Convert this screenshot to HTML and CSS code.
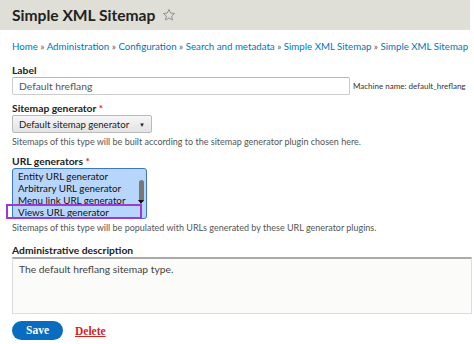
FILE: index.html
```html
<!DOCTYPE html>
<html lang="en">
<head>
	<meta charset="UTF-8">
	<title>Simple XML Sitemap</title>
	<link rel="stylesheet" href="styles.css">
</head>
<body>
	<div class="page-head">
		<h1>Simple XML Sitemap</h1>
		<svg class="star" width="14" height="14" viewBox="0 0 24 24"><path d="M12 2.5l2.9 6.2 6.6.7-5 4.5 1.5 6.6L12 17.1l-6 3.4 1.5-6.6-5-4.5 6.6-.7z" fill="none" stroke="#8c8c8c" stroke-width="1.6" stroke-linejoin="round"/></svg>
	</div>
	<div class="crumbs">
		<a href="#">Home</a> » <a href="#">Administration</a> » <a href="#">Configuration</a> » <a href="#">Search and metadata</a> » <a href="#">Simple XML Sitemap</a> » <a href="#">Simple XML Sitemap</a>
	</div>
	<form class="form">
		<div class="item">
			<label>Label</label>
			<div class="row">
				<div class="text-input">Default hreflang</div>
				<span class="machine">Machine name: default_hreflang</span>
			</div>
		</div>
		<div class="item">
			<label>Sitemap generator <span class="req">*</span></label>
			<div class="select">Default sitemap generator <span class="arrow">▼</span></div>
			<div class="desc">Sitemaps of this type will be built according to the sitemap generator plugin chosen here.</div>
		</div>
		<div class="item gap">
			<label>URL generators <span class="req">*</span></label>
			<div class="listbox">
				<ul>
					<li>Entity URL generator</li>
					<li>Arbitrary URL generator</li>
					<li>Menu link URL generator</li>
					<li>Views URL generator</li>
				</ul>
				<div class="scroll"><span class="thumb"></span><span class="down"></span></div>
				<div class="mark"></div>
			</div>
			<div class="desc">Sitemaps of this type will be populated with URLs generated by these URL generator plugins.</div>
		</div>
		<div class="item">
			<label>Administrative description</label>
			<div class="textarea">The default hreflang sitemap type.</div>
		</div>
		<div class="actions">
			<span class="save">Save</span>
			<a href="#" class="delete">Delete</a>
		</div>
	</form>
</body>
</html>
```
FILE: styles.css
```css
*{
	margin: 0;
	padding: 0;
	box-sizing: border-box;
}
body{
	font-family: Lato, "Open Sans", sans-serif;
	font-size: 10.3px;
	color: #333;
	background: #fff;
	width: 474px;
	height: 344px;
	overflow: hidden;
}
.page-head{
	display: flex;
	align-items: center;
	gap: 7px;
	height: 30px;
	width: 470px;
	background: #dfded7;
	padding: 0 12px 1px;
}
h1{
	font-size: 15.6px;
	font-weight: 700;
	color: #222;
	line-height: 22px;
}
.star{
	margin-top: 1px;
}
.crumbs{
	padding: 9px 12px 0;
	line-height: 14px;
	font-size: 9.7px;
	color: #555;
	white-space: nowrap;
}
.crumbs a{
	color: #0074bd;
	text-decoration: none;
}
.form{
	padding: 11px 12px 0;
}
.item{
	margin-bottom: 7px;
}
.item.gap{
	margin-bottom: 10px;
}
label{
	display: block;
	font-weight: 700;
	font-size: 10.3px;
	line-height: 12px;
	color: #222;
	margin-bottom: 1px;
}
.req{
	color: #e62600;
}
.row{
	display: flex;
	align-items: center;
}
.text-input{
	flex-shrink: 0;
	width: 338px;
	height: 18px;
	border: 1px solid #ccc;
	border-top-color: #b8b8b8;
	border-radius: 2px;
	padding: 0 6px;
	line-height: 16px;
	color: #555;
}
.machine{
	font-size: 8px;
	margin-left: 3px;
	color: #333;
	white-space: nowrap;
}
.select{
	display: flex;
	justify-content: space-between;
	align-items: center;
	width: 140px;
	height: 18px;
	border: 1px solid #bbb;
	border-radius: 2px;
	background: linear-gradient(#f6f6f6, #e3e3e3);
	padding: 0 6px;
	font-size: 9.6px;
	color: #222;
}
.arrow{
	font-size: 6px;
}
.desc{
	font-size: 9px;
	line-height: 12px;
	color: #555;
	margin-top: 3px;
	white-space: nowrap;
}
.listbox{
	position: relative;
	width: 135px;
	height: 51px;
	border: 1px solid #3c78c0;
	border-radius: 3px;
	background: #b8d6fb;
	padding: 1px 0 0 5px;
	display: flex;
}
.listbox ul{
	list-style: none;
	flex: 1;
}
.listbox li{
	line-height: 12px;
	font-size: 9.8px;
	color: #111;
	white-space: nowrap;
}
.scroll{
	width: 8px;
	margin: 8px 1px 1px 0;
	position: relative;
}
.thumb{
	display: block;
	width: 5px;
	height: 22px;
	background: #777;
	border-radius: 3px;
	margin: 2px auto 0;
}
.down{
	position: absolute;
	left: 1px;
	top: 22px;
	border-left: 3px solid transparent;
	border-right: 3px solid transparent;
	border-top: 4px solid #111;
}
.mark{
	position: absolute;
	left: -7px;
	top: 35px;
	width: 136px;
	height: 15px;
	border: 2px solid #9b3ad6;
}
.textarea{
	width: 460px;
	height: 57px;
	border: 1px solid #ddd;
	border-top: 2px solid #aaa;
	background: #fbfbfa;
	padding: 3px 6px;
	line-height: 14px;
	color: #444;
}
.actions{
	display: flex;
	align-items: center;
}
.save{
	display: inline-block;
	width: 51px;
	height: 19px;
	border-radius: 10px;
	background: #0a6cbf;
	color: #fff;
	font-family: "Liberation Serif", serif;
	font-weight: 700;
	font-size: 11.5px;
	line-height: 19px;
	text-align: center;
}
.delete{
	margin-left: 12px;
	color: #d0261f;
	text-decoration: underline;
	font-family: "Liberation Serif", serif;
	font-weight: 700;
	font-size: 11.5px;
}
```
